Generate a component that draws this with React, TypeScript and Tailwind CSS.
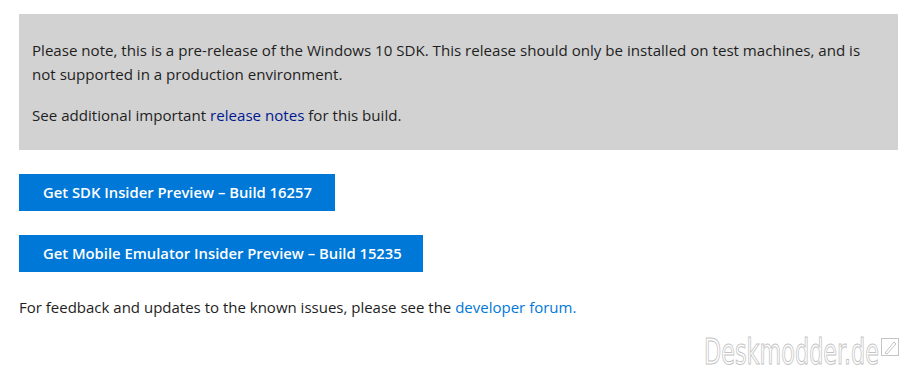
export default function App() {
  return (
    <div className="w-[901px] h-[374px] bg-white relative overflow-hidden" style={{ fontFamily: '"Open Sans", "Noto Sans", sans-serif' }}>
      <div className="pt-[14px] pl-[19px] pr-[3px]">
        <div className="bg-[#d2d2d2] w-[879px] h-[136px] pl-[13px] pr-[30px] pt-[24px] text-[15.1px] leading-[24px] text-[#1e1e1e]">
          <p>Please note, this is a pre-release of the Windows 10 SDK. This release should only be installed on test machines, and is not supported in a production environment.</p>
          <p className="mt-[17px]">See additional important <a className="text-[#00188f] font-medium">release notes</a> for this build.</p>
        </div>
        <div className="mt-[24px] flex flex-col items-start gap-[24px]">
          <div className="bg-[#0078d7] h-[37px] w-[316px] pl-[24px] flex items-center text-white font-semibold text-[14.8px]">Get SDK Insider Preview – Build 16257</div>
          <div className="bg-[#0078d7] h-[37px] w-[404px] pl-[24px] flex items-center text-white font-semibold text-[14.8px]">Get Mobile Emulator Insider Preview – Build 15235</div>
        </div>
        <p className="mt-[24px] text-[15px] text-[#1e1e1e]">For feedback and updates to the known issues, please see the <a className="text-[#0078d7] font-medium">developer forum.</a></p>
      </div>
      <svg width="200" height="44" viewBox="0 0 200 44" className="absolute left-[700px] top-[328px]">
        <text transform="translate(4,36) scale(0.7,1)" x="0" y="0" textLength="250" lengthAdjust="spacingAndGlyphs" fontSize="36" fill="none" stroke="#c4c4c4" strokeWidth="1" fontFamily="DejaVu Sans Condensed, sans-serif">Deskmodder.de</text>
        <rect x="181.5" y="10.5" width="17" height="17" fill="none" stroke="#c4c4c4" />
        <path d="M185 25 L194 14 L196 16 L187 26 Z" fill="none" stroke="#c4c4c4" />
      </svg>
    </div>
  );
}
